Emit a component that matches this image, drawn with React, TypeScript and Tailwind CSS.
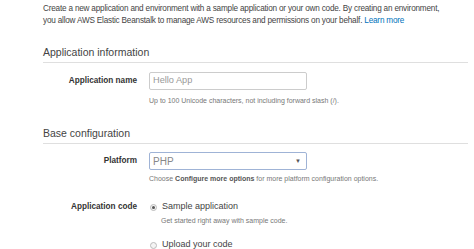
const font = { fontFamily: '"Liberation Sans", Arial, sans-serif' };

function Row({ label, children }: { label: string; children: React.ReactNode }) {
  return (
    <div className="flex gap-[12px]">
      <div className="w-[94px] shrink-0 text-right text-[8.2px] font-bold leading-[18px] text-[#333]">
        {label}
      </div>
      <div className="flex-1">{children}</div>
    </div>
  );
}

function Radio({ checked }: { checked?: boolean }) {
  return (
    <span className="flex h-[7px] w-[7px] items-center justify-center rounded-full border border-[#bbb] bg-[#f4f4f4]">
      {checked && <span className="h-[3px] w-[3px] rounded-full bg-[#555]" />}
    </span>
  );
}

export default function App() {
  return (
    <div className="h-[249px] w-[474px] overflow-hidden bg-white pl-[43px] pr-[6px]" style={font}>
      <p className="whitespace-nowrap pt-[3px] text-[8.2px] leading-[12px] tracking-[-0.2px] text-[#444]">
        Create a new application and environment with a sample application or your own code. By creating an environment,
        <br />
        you allow AWS Elastic Beanstalk to manage AWS resources and permissions on your behalf.{" "}
        <a className="text-[#0073bb]">Learn more</a>
      </p>

      <h2 className="mt-[17px] border-b border-[#dfdfdf] pb-[2px] text-[10.5px] leading-[16px] text-[#444]">
        Application information
      </h2>
      <div className="mt-[9px]">
        <Row label="Application name">
          <div className="flex h-[18px] w-[158px] items-center rounded-[2px] border border-[#ccc] px-[3px] text-[9.2px] text-[#999]">
            Hello App
          </div>
          <div className="mt-[6px] text-[7px] leading-[10px] text-[#777]">
            Up to 100 Unicode characters, not including forward slash (/).
          </div>
        </Row>
      </div>

      <h2 className="mt-[19px] border-b border-[#dfdfdf] pb-[2px] text-[10.5px] leading-[16px] text-[#444]">
        Base configuration
      </h2>
      <div className="mt-[8px]">
        <Row label="Platform">
          <div className="flex h-[18px] w-[158px] items-center justify-between rounded-[2px] border border-[#9fb3d6] px-[3px] text-[10px] text-[#888]">
            <span>PHP</span>
            <span className="pr-[2px] text-[6px] text-[#555]">▼</span>
          </div>
          <div className="mt-[4px] text-[7px] leading-[10px] text-[#777]">
            Choose <span className="font-bold text-[#555]">Configure more options</span> for more platform configuration options.
          </div>
        </Row>
      </div>
      <div className="mt-[14px]">
        <Row label="Application code">
          <div className="flex h-[18px] items-center gap-[5px] pl-[1px] text-[9px] text-[#444]">
            <Radio checked />
            <span>Sample application</span>
          </div>
          <div className="pl-[12px] text-[7px] leading-[10px] text-[#777]">Get started right away with sample code.</div>
          <div className="mt-[10px] flex h-[18px] items-center gap-[5px] pl-[1px] text-[9px] text-[#444]">
            <Radio />
            <span>Upload your code</span>
          </div>
        </Row>
      </div>
    </div>
  );
}
